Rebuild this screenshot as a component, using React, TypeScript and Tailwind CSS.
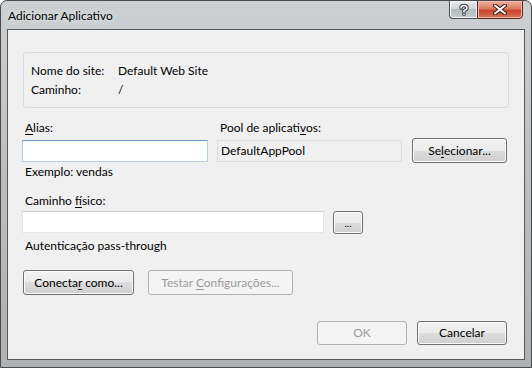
const font = { fontFamily: "Lato, 'Open Sans', sans-serif" };

function U({ children }: { children: React.ReactNode }) {
  return <span className="underline underline-offset-2">{children}</span>;
}

function Btn({
  children,
  w,
  h = "h-[25px]",
  disabled,
}: {
  children: React.ReactNode;
  w: string;
  h?: string;
  disabled?: boolean;
}) {
  return (
    <div
      className={
        disabled
          ? `${w} ${h} flex items-center justify-center rounded-[3px] border border-[#adb2b5] bg-[#f4f4f4] text-[#9a9a9a]`
          : `${w} ${h} flex items-center justify-center rounded-[3px] border border-[#707070] bg-[linear-gradient(to_bottom,#f2f2f2_0%,#ebebeb_50%,#dddddd_50%,#cfcfcf_100%)] shadow-[inset_0_0_0_1px_#fbfbfb] text-black`
      }
    >
      <span>{children}</span>
    </div>
  );
}

export default function App() {
  return (
    <div
      className="w-[532px] h-[368px] flex flex-col overflow-hidden rounded-t-[7px] border border-[#4a4a4a] bg-[linear-gradient(to_bottom,#cdd0d2_0%,#bec1c4_40%,#aeb1b4_100%)] text-[12px] text-black"
      style={font}
    >
      {/* title bar */}
      <div className="h-[28px] flex items-start shrink-0">
        <div className="pl-[7px] pt-[7px] leading-[16px] [text-shadow:0_0_6px_#ffffff]">Adicionar Aplicativo</div>
        <div className="ml-auto mr-[8px] flex h-[19px] -mt-px">
          <div className="w-[28px] h-full flex items-center justify-center border border-[#4b4f54] border-r-0 rounded-bl-[4px] bg-[linear-gradient(to_bottom,#e6e9ec_0%,#cfd3d7_50%,#b6bcc2_50%,#c4cacf_100%)] shadow-[inset_0_0_0_1px_#f4f6f8]">
            <svg width="10" height="12" viewBox="0 0 10 12">
              <path d="M2 4 Q2 1.5 5 1.5 Q8 1.5 8 4 Q8 5.5 5 6.5 L5 8" fill="none" stroke="#2e3136" strokeWidth="3.4" strokeLinecap="round" />
              <circle cx="5" cy="10.3" r="1.7" fill="#2e3136" />
              <path d="M2 4 Q2 1.5 5 1.5 Q8 1.5 8 4 Q8 5.5 5 6.5 L5 8" fill="none" stroke="#ffffff" strokeWidth="1.5" strokeLinecap="round" />
              <circle cx="5" cy="10.3" r="0.9" fill="#ffffff" />
            </svg>
          </div>
          <div className="w-[46px] h-full flex items-center justify-center border border-[#5a2418] rounded-br-[4px] bg-[linear-gradient(to_bottom,#eeb0a0_0%,#dc7a62_45%,#c8432a_55%,#da735b_100%)] shadow-[inset_0_0_0_1px_#f3bcae]">
            <svg width="14" height="11" viewBox="0 0 14 11">
              <path d="M2 1.5 L12 9.5 M12 1.5 L2 9.5" stroke="#3a1a12" strokeWidth="4" strokeLinecap="round" />
              <path d="M2 1.5 L12 9.5 M12 1.5 L2 9.5" stroke="#ffffff" strokeWidth="2" strokeLinecap="round" />
            </svg>
          </div>
        </div>
      </div>

      {/* client area */}
      <div className="ml-[6px] mr-[6px] mb-[7px] flex-1 border border-[#585858] bg-[#f0f0f0] flex flex-col">
        <div className="ml-[15px] mt-[22px] w-[486px] h-[56px] rounded-[3px] border border-[#d3dde6] pl-[7px] pt-[10px] leading-[16px]">
          <div className="flex h-[19px]">
            <div className="w-[87px]">Nome do site:</div>
            <div>Default Web Site</div>
          </div>
          <div className="flex h-[19px]">
            <div className="w-[87px]">Caminho:</div>
            <div>/</div>
          </div>
        </div>

        <div className="ml-[14px] mt-[12px] flex leading-[16px] h-[16px]">
          <div className="w-[195px] pl-[3px]">
            <U>A</U>lias:
          </div>
          <div className="pl-[3px]">
            Pool de aplicati<U>v</U>os:
          </div>
        </div>

        <div className="ml-[14px] mt-[2px] flex items-center h-[25px]">
          <div className="w-[186px] h-[22px] bg-white border border-[#b7d0e8] border-t-[#6b96c2]" />
          <div className="ml-[9px] w-[185px] h-[22px] border border-[#dadde1] flex items-center pl-[3px]">
            DefaultAppPool
          </div>
          <div className="ml-[10px]">
            <Btn w="w-[95px]">
              Se<U>l</U>ecionar...
            </Btn>
          </div>
        </div>

        <div className="ml-[17px] mt-px leading-[16px]">Exemplo: vendas</div>

        <div className="ml-[17px] mt-[13px] leading-[16px]">
          Caminho <U>f</U>ísico:
        </div>

        <div className="ml-[14px] mt-[2px] flex items-start h-[23px]">
          <div className="w-[302px] h-[22px] bg-white border border-[#e2e6eb] border-t-[#cdd1d6]" />
          <div className="ml-[9px]">
            <Btn w="w-[30px]" h="h-[23px]">
              <span className="text-[10px]">...</span>
            </Btn>
          </div>
        </div>

        <div className="ml-[17px] mt-[4px] leading-[16px]">Autenticação pass-through</div>

        <div className="ml-[15px] mt-[16px] flex">
          <Btn w="w-[111px]">
            Conecta<U>r</U> como...
          </Btn>
          <div className="ml-[14px]">
            <Btn w="w-[145px]" disabled>
              Testar <U>C</U>onfigurações...
            </Btn>
          </div>
        </div>

        <div className="mt-[26px] ml-[309px] flex">
          <Btn w="w-[90px]" h="h-[24px]" disabled>
            OK
          </Btn>
          <div className="ml-[10px]">
            <Btn w="w-[90px]" h="h-[24px]">
              Cancelar
            </Btn>
          </div>
        </div>
      </div>
    </div>
  );
}
